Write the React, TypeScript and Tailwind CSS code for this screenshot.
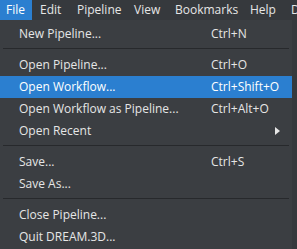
const menuBar = [
  { label: "File", w: "w-[32px]" },
  { label: "Edit", w: "w-[37px]" },
  { label: "Pipeline", w: "w-[57px]" },
  { label: "View", w: "w-[41px]" },
  { label: "Bookmarks", w: "w-[75px]" },
  { label: "Help", w: "w-[41px]" },
  { label: "DREAM.3D", w: "w-[70px]" },
];

type Item = { label: string; shortcut?: string; active?: boolean; submenu?: boolean } | "sep";

const items: Item[] = [
  { label: "New Pipeline...", shortcut: "Ctrl+N" },
  "sep",
  { label: "Open Pipeline...", shortcut: "Ctrl+O" },
  { label: "Open Workflow...", shortcut: "Ctrl+Shift+O", active: true },
  { label: "Open Workflow as Pipeline...", shortcut: "Ctrl+Alt+O" },
  { label: "Open Recent", submenu: true },
  "sep",
  { label: "Save...", shortcut: "Ctrl+S" },
  { label: "Save As..." },
  "sep",
  { label: "Close Pipeline..." },
  { label: "Quit DREAM.3D..." },
];

export default function App() {
  return (
    <div
      className="w-[297px] h-[249px] overflow-hidden bg-[#36393d] text-[#e6e6e6] text-[12px]"
      style={{ fontFamily: '"Open Sans", "Noto Sans", sans-serif' }}
    >
      {/* menu bar */}
      <div className="flex h-[20px] items-center whitespace-nowrap">
        {menuBar.map((m, i) => (
          <div
            key={m.label}
            className={`h-full flex items-center shrink-0 ${m.w} ${i === 0 ? "bg-[#2b7fd0] text-white pl-[6px]" : "pl-[8px]"}`}
          >
            {m.label}
          </div>
        ))}
      </div>

      {/* dropdown */}
      <div className="w-[292px] bg-[#3b3e42] pt-[3px] pb-[2px]">
        {items.map((it, i) =>
          it === "sep" ? (
            <div key={i} className="h-[9px] pt-[3px] px-[3px]">
              <div className="h-px bg-[#27292c]" />
            </div>
          ) : (
            <div
              key={i}
              className={`h-[22px] flex items-center pl-[19px] pr-[10px] whitespace-nowrap ${it.active ? "bg-[#2b7fd0] text-white" : ""}`}
            >
              <span className="w-[192px]">{it.label}</span>
              <span className="flex-1">{it.shortcut}</span>
              {it.submenu && (
                <svg width="6" height="8" viewBox="0 0 6 8" className="mr-[1px]">
                  <path d="M0 0 L5 4 L0 8 Z" fill="#e6e6e6" />
                </svg>
              )}
            </div>
          )
        )}
      </div>
    </div>
  );
}
